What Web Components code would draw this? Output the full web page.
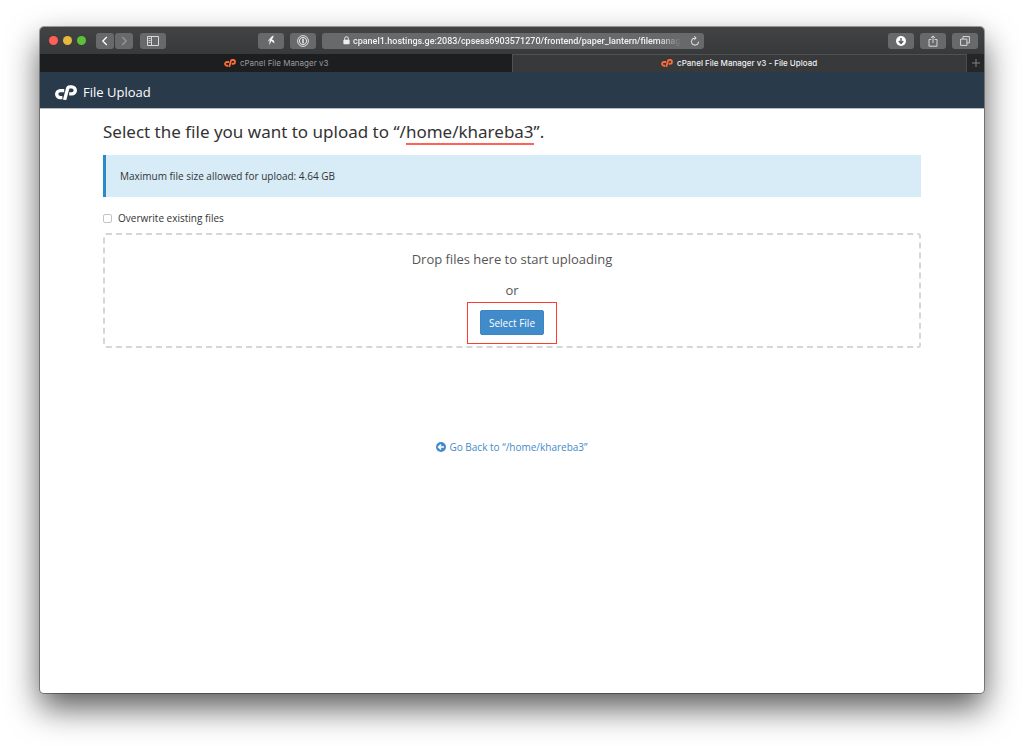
<!DOCTYPE html>
<html lang="en">
<head>
<meta charset="utf-8">
<meta name="viewport" content="width=device-width, initial-scale=1">
<title>cPanel File Manager v3 - File Upload</title>
<style>
html, body { height: 100%; }
body { margin: 0; background: #fff; font-family: "Open Sans", "Noto Sans", sans-serif; color: #333; }
</style>
</head>
<body>
<browser-window>
  <browser-toolbar slot="chrome" address="cpanel1.hostings.ge:2083/cpsess6903571270/frontend/paper_lantern/filemanager"></browser-toolbar>
  <tab-strip slot="chrome">
    <browser-tab>cPanel File Manager v3</browser-tab>
    <browser-tab active>cPanel File Manager v3 - File Upload</browser-tab>
  </tab-strip>
  <page-header>File Upload</page-header>
  <upload-page></upload-page>
</browser-window>

<script>
function define(name, html) {
  const template = document.createElement('template');
  template.innerHTML = html;
  customElements.define(name, class extends HTMLElement {
    constructor() {
      super();
      this.attachShadow({ mode: 'open' }).appendChild(template.content.cloneNode(true));
    }
    connectedCallback() {
      const address = this.shadowRoot.querySelector('input[type=text]');
      if (address) address.value = this.getAttribute('address') || '';
      const button = this.shadowRoot.querySelector('button');
      if (button && this.hasAttribute('label')) button.setAttribute('aria-label', this.getAttribute('label'));
    }
  });
}

define('cp-logo', `
<style>
:host { display: block; width: 22px; height: 15px; color: inherit; }
svg { display: block; width: 100%; height: 100%; }
</style>
<svg viewBox="0 0 22 15" fill="none" stroke="currentColor" stroke-width="3.4" aria-hidden="true">
  <path d="M9.2 5.6H5.2a3.5 3.5 0 0 0 0 7H7.4"/>
  <path d="M9.6 14.9 12.6 3.6Q13.1 1.9 14.6 1.9H16.8a3.5 3.5 0 0 1 0 7h-2.6"/>
</svg>`);

define('tool-button', `
<style>
:host { display: block; width: 26px; height: 16px; }
:host([narrow]) { width: 18px; }
button { display: flex; align-items: center; justify-content: center; width: 100%; height: 100%; padding: 0; border: 0; border-radius: 3px; background: #68696b; color: #eee; }
</style>
<button type="button"><slot></slot></button>`);

define('browser-toolbar', `
<style>
:host { display: flex; align-items: center; height: 27px; padding: 0 6px 0 9px; background: linear-gradient(#424345, #38393b); }
svg { display: block; }
.group { display: flex; gap: 6px; }
.lights { display: flex; gap: 5px; margin-right: 10px; }
.lights i { width: 9px; height: 9px; border-radius: 50%; background: #ff5f57; }
.lights i:nth-child(2) { background: #e6b83c; }
.lights i:nth-child(3) { background: #5cc038; }
.nav { display: flex; gap: 1px; margin-right: 7px; }
.near { flex: 1; } .far { flex: 2; }
.address { display: flex; align-items: center; flex: 0 1 382px; min-width: 0; height: 16px; margin-left: 6px; padding: 0 4px 0 21px; box-sizing: border-box; border-radius: 3px; background: #68696b; color: #eee; }
input { flex: 1; min-width: 0; height: 16px; margin: 0 9px 0 3px; padding: 0; border: 0; outline: 0; background: none; color: #f2f2f2; font: 500 9px/16px Roboto, sans-serif; -webkit-mask: linear-gradient(90deg, #000 93%, transparent); mask: linear-gradient(90deg, #000 93%, transparent); }
.reload { display: block; padding: 0; border: 0; background: none; color: #eee; }
</style>
<div class="lights"><i></i><i></i><i></i></div>
<div class="nav">
  <tool-button narrow label="Back"><svg width="10" height="10" viewBox="0 0 10 10" fill="none" stroke="#fff" stroke-width="1.3"><path d="M6.8 1 2.8 5l4 4"/></svg></tool-button>
  <tool-button narrow label="Forward"><svg width="10" height="10" viewBox="0 0 10 10" fill="none" stroke="#999" stroke-width="1.2"><path d="m3.2 1 4 4-4 4"/></svg></tool-button>
</div>
<tool-button label="Sidebar"><svg width="12" height="10" viewBox="0 0 12 10" fill="none" stroke="#e4e4e4"><path d="M.5.5h11v9H.5zM4.5.5v9M1.5 2.5h2M1.5 4.5h2M1.5 6.5h2" stroke-width=".9"/></svg></tool-button>
<span class="near"></span>
<div class="group">
  <tool-button label="Extension"><svg width="10" height="11" viewBox="0 0 10 11"><path d="M7.6.2 5.4 1.8 3.4 4 1.6 6.6 3.8 5.2 3 10.2 4.7 7.4 5.2 6 8.4 8.6 8 5.6 6 4.6 7.2 2.6Z" fill="#f4f4f4"/></svg></tool-button>
  <tool-button label="Password manager"><svg width="12" height="12" viewBox="0 0 12 12" fill="none" stroke="#eee"><circle cx="6" cy="6" r="5.4" stroke-width=".9"/><circle cx="6" cy="6" r="3.6" stroke-width="1"/><path d="M6 3.7v4.6" stroke-width="1.5"/></svg></tool-button>
</div>
<div class="address">
  <svg width="7" height="9" viewBox="0 0 7 9"><path d="M1.7 4V2.5a1.8 1.8 0 0 1 3.6 0V4" fill="none" stroke="#eee"/><rect x=".4" y="3.7" width="6.2" height="4.6" rx=".7" fill="#eee"/></svg>
  <input type="text" aria-label="Address" readonly>
  <button class="reload" type="button" aria-label="Reload"><svg width="10" height="10" viewBox="0 0 10 10" fill="none" stroke="#eee" stroke-width="1"><path d="M5.5 2H5a3.6 3.6 0 1 0 3.6 3.7M4.3.2 6.2 2 4.3 3.8"/></svg></button>
</div>
<span class="far"></span>
<div class="group">
  <tool-button label="Downloads"><svg width="12" height="12" viewBox="0 0 12 12"><circle cx="6" cy="6" r="5" fill="#fff"/><path d="M6 3v5M3.8 6 6 8.4 8.2 6" fill="none" stroke="#5a5b5d" stroke-width="1.4"/></svg></tool-button>
  <tool-button label="Share"><svg width="10" height="12" viewBox="0 0 10 12" fill="none" stroke="#e4e4e4" stroke-width=".9"><path d="M3.3 4.5H1v6.7h8V4.5H6.7M5 8V1M2.9 3 5 .9 7.1 3"/></svg></tool-button>
  <tool-button label="Tabs"><svg width="10" height="10" viewBox="0 0 10 10" fill="none" stroke="#e4e4e4" stroke-width=".9"><path d="M.6 3.1h6.3v6.3H.6zM3 3V.6h6.4v6.3H7"/></svg></tool-button>
</div>`);

define('tab-strip', `
<style>
:host { display: flex; height: 18px; background: #1d1e1f; }
.tabs { display: grid; grid-template-columns: 51fr 49fr; flex: 1; }
button { display: flex; align-items: center; justify-content: center; width: 18px; padding: 0; border: 0; border-left: 1px solid #4c4d4f; background: #252627; }
</style>
<div class="tabs"><slot></slot></div>
<button type="button" aria-label="New tab"><svg width="8" height="8" viewBox="0 0 8 8" stroke="#8a8a8a" stroke-width=".9"><path d="M4 0v8M0 4h8"/></svg></button>`);

define('browser-tab', `
<style>
:host { display: flex; align-items: center; justify-content: center; gap: 4px; height: 18px; color: #9b9c9d; font: 400 8px/18px Inter, sans-serif; white-space: nowrap; }
:host([active]) { color: #f0f0f0; font-weight: 500; background: #38393b; box-shadow: inset 1px 1px #505153; }
cp-logo { width: 12px; height: 8px; color: #ff6c37; }
</style>
<cp-logo></cp-logo><span><slot></slot></span>`);

define('page-header', `
<style>
:host { display: flex; align-items: center; gap: 6px; box-sizing: border-box; height: 37px; padding: 4px 15px 0; background: #293a4a; color: #fff; border-bottom: 1px solid #b5bbc0; }
h1 { margin: 0; font: 400 13px/20px "Open Sans", sans-serif; }
</style>
<cp-logo></cp-logo><h1><slot></slot></h1>`);

define('browser-window', `
<style>
:host { display: flex; flex-direction: column; min-height: 100vh; box-sizing: border-box; padding: 27px 40px 53px; }
.window { display: flex; flex-direction: column; flex: 1; border-radius: 4px; overflow: hidden; background: #fff; box-shadow: 0 0 0 1px rgba(0,0,0,.35), 0 15px 33px rgba(0,0,0,.65); }
</style>
<div class="window"><slot name="chrome"></slot><slot></slot></div>`);

define('info-notice', `
<style>
:host { display: block; padding: 11px 14px; border-left: 3px solid #2c8ac4; background: #d7ecf7; font-size: 10px; line-height: 20px; }
</style>
<slot></slot>`);

define('drop-zone', `
<style>
:host { display: flex; flex-direction: column; align-items: center; box-sizing: border-box; height: 115px; padding-top: 14px; border: 2px dashed #d6d6d6; border-radius: 3px; color: #555; }
p { margin: 0 0 11px; font-size: 13px; line-height: 20px; }
p + p { margin-bottom: 2px; }
.mark { padding: 7px 12px 8px; border: 1px solid #ff3b2f; }
button { display: block; height: 25px; padding: 0 8px; border: 1px solid #3c86c4; border-radius: 2px; background: #428bca; color: #fff; font: 10px/20px "Open Sans", sans-serif; }
</style>
<p>Drop files here to start uploading</p>
<p>or</p>
<div class="mark"><button type="button">Select File</button></div>`);

define('upload-page', `
<style>
:host { display: block; padding: 11px 63px; }
h2 { margin: 0 0 11px; font: 400 17px/24px "Noto Sans", sans-serif; }
.path { position: relative; }
.path::after { content: ""; position: absolute; left: 0; right: 0; bottom: -2px; height: 2px; background: #ff6257; }
label { display: flex; align-items: center; gap: 6px; margin: 11px 0 5px; font-size: 10px; line-height: 20px; }
input { appearance: none; box-sizing: border-box; width: 9px; height: 9px; margin: 0; border: 1px solid #c4c4c4; border-radius: 2px; background: #fff; }
nav { display: flex; justify-content: center; margin-top: 89px; }
a { display: flex; align-items: center; gap: 3px; color: #428bca; font-size: 10px; line-height: 20px; text-decoration: none; }
</style>
<h2>Select the file you want to upload to “/<span class="path">home/khareba3</span>”.</h2>
<info-notice>Maximum file size allowed for upload: 4.64 GB</info-notice>
<label><input type="checkbox">Overwrite existing files</label>
<drop-zone></drop-zone>
<nav><a href="#"><svg width="10" height="10" viewBox="0 0 10 10" aria-hidden="true"><circle cx="5" cy="5" r="5" fill="#428bca"/><path d="M8 5H3M5 2.6 2.6 5 5 7.4" fill="none" stroke="#fff" stroke-width="1.5"/></svg>Go Back to “/home/khareba3”</a></nav>`);
</script>
</body>
</html>
